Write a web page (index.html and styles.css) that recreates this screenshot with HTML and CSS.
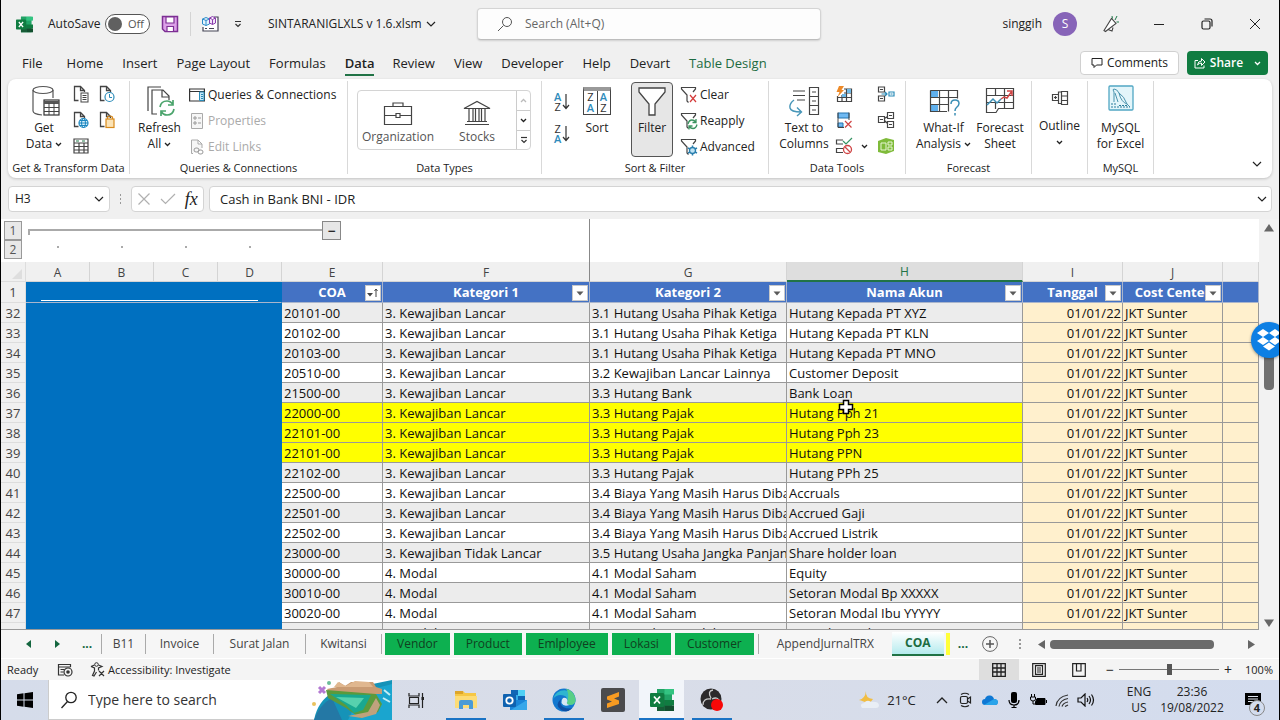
FILE: index.html
```html
<!DOCTYPE html>
<html lang="en">
<head>
<meta charset="utf-8">
<title>SINTARANIGLXLS v 1.6.xlsm - Excel</title>
<link rel="stylesheet" href="styles.css">
</head>
<body>
<svg class="defs" aria-hidden="true">
  <symbol id="chev" viewBox="0 0 10 6"><path d="M1 1l4 4 4-4" fill="none" stroke="currentColor" stroke-width="1.2"/></symbol>
  <symbol id="chev-s" viewBox="0 0 7 5"><path d="M1 1l2.500 2.500L6 1" fill="none" stroke="currentColor" stroke-width="1.300"/></symbol>
  <symbol id="tri" viewBox="0 0 8 5"><path d="M0.500 0.500h7L4 4.500z" fill="#5a5a5a"/></symbol>
  <symbol id="page" viewBox="0 0 16 18"><path d="M5.500 15.500h-4v-14h6l4 4v1.500M7.500 1.500v4h4" fill="none" stroke="#444" stroke-width="1.300"/></symbol>
  <symbol id="funnel" viewBox="0 0 18 18"><path d="M8.500 16.500L7 15V9L1.500 3V1.500h14V3L13 6" fill="none" stroke="#444" stroke-width="1.200"/></symbol>
  <symbol id="xl" viewBox="0 0 24 24"><path d="M7 1h15v22H7z" fill="#21a366"/><path d="M7 1h7.500v5.500H7z" fill="#21a366"/><path d="M14.500 1H24v5.500h-9.500z" fill="#33c481"/><path d="M7 6.500h7.500V12H7z" fill="#107c41"/><path d="M14.500 12H24v5.500h-9.500z" fill="#107c41"/><path d="M7 12h7.500v11H7z" fill="#185c37"/><path d="M14.500 17.500H24V23h-9.500z" fill="#134f2f"/><rect y="5" width="14" height="14" rx="1" fill="#107c41"/><path d="M4 8.500l6 7M10 8.500l-6 7" stroke="#fff" stroke-width="1.800"/></symbol>
</svg>

<header class="titlebar">
  <div class="title-left">
    <svg class="i16" viewBox="0 0 24 24"><use href="#xl"/></svg>
    <span class="autosave">AutoSave</span>
    <label class="toggle"><input type="checkbox" aria-label="AutoSave">Off</label>
    <button class="save" aria-label="Save"><svg width="18" height="18" viewBox="0 0 18 18"><path d="M1.500 1.500h15v15H4l-2.500-2.500z" fill="#dca0e8" stroke="#7d2f94" stroke-width="1.500"/><path d="M5 2h8v6H5zM6 11.500h6.500v5H6z" fill="#fff" stroke="#7d2f94" stroke-width="1.200"/></svg></button>
    <span class="qsep"></span>
    <button class="qat" aria-label="Model"><svg width="18" height="18" viewBox="0 0 18 18"><path d="M13 2h4v14H2v-4" fill="#fff" stroke="#445" stroke-width="1.200"/><path d="M1.500 4L5 2.500 8.500 4v5L5 10.500 1.500 9zM1.500 4L5 5.500 8.500 4M5 5.500v5" fill="#e4f4fd" stroke="#2c8ccb"/><path d="M8.500 3L11.500 1.500 14.500 3v5L11.500 9.500 8.500 8zM8.500 3l3 1.500 3-1.500M11.500 4.500v5" fill="#f3e5fa" stroke="#8b3fae"/><path d="M4 13.500h2M8 13.500h5" stroke="#445"/></svg></button>
    <button class="more" aria-label="Customize toolbar"><svg width="8" height="8" viewBox="0 0 8 8"><path d="M1 1.500h6" stroke="#333"/><path d="M1.500 4L4 6.500 6.500 4" fill="none" stroke="#333" stroke-width="1.200"/></svg></button>
    <button class="docname">SINTARANIGLXLS v 1.6.xlsm <svg width="10" height="6"><use href="#chev"/></svg></button>
  </div>
  <label class="search"><svg width="16" height="16" viewBox="0 0 16 16"><circle cx="10" cy="6" r="4.500" fill="none" stroke="#555"/><path d="M6.500 9.500L1 15" stroke="#555"/></svg><input type="text" placeholder="Search (Alt+Q)" aria-label="Search"></label>
  <div class="title-right">
    <span>singgih</span>
    <button class="avatar" aria-label="Account">S</button>
    <button class="win" aria-label="Coming soon"><svg width="18" height="18" viewBox="0 0 18 18"><path d="M2 15.500L9.500 3.500l4.500 5L3.500 16.500zM6 14.500l4 1.500 1-3.500" fill="#fff" stroke="#444" stroke-width="1.100"/><path d="M10.500 3.500L10 1M13 5l2-4M14.500 7H17" stroke="#1e7a4a"/></svg></button>
    <button class="win" aria-label="Minimize"><svg width="12" height="12" viewBox="0 0 12 12"><path d="M1 6.500h10" stroke="#222"/></svg></button>
    <button class="win" aria-label="Restore"><svg width="12" height="12" viewBox="0 0 12 12"><rect x="1" y="3" width="8" height="8" rx="1.500" fill="none" stroke="#222" stroke-width="1.200"/><path d="M3.500 1H9q2 0 2 2v5.500" fill="none" stroke="#222" stroke-width="1.200"/></svg></button>
    <button class="win" aria-label="Close"><svg width="12" height="12" viewBox="0 0 12 12"><path d="M1 1l10 10M11 1L1 11" stroke="#222"/></svg></button>
  </div>
</header>

<nav class="tabs">
  <button class="file">File</button><button>Home</button><button>Insert</button><button>Page Layout</button><button>Formulas</button><button class="on">Data</button><button>Review</button><button>View</button><button>Developer</button><button>Help</button><button>Devart</button><button class="ctx">Table Design</button>
  <div class="tab-actions">
    <button class="comments"><svg width="12" height="12" viewBox="0 0 12 12"><path d="M1 1.500h10v6.500H5.500L3 10.500V8H1z" fill="none" stroke="#222"/></svg>Comments</button>
    <button class="share"><svg width="12" height="12" viewBox="0 0 12 12"><path d="M4 3.500H1v7.500h9V8.500M3.500 8q.5-4 4-4V1.500L11 5 7.500 8.500V6Q5 6 3.500 8z" fill="none" stroke="#fff"/></svg>Share<svg class="share-chev" width="7" height="5"><use href="#chev-s"/></svg></button>
  </div>
</nav>

<section class="ribbon">
  <div class="group g-get">
    <div class="body">
      <button class="big"><svg width="32" height="32" viewBox="0 0 32 32"><path d="M5 5v21q0 3 9 4M25 5v8" fill="none" stroke="#555" stroke-width="1.200"/><ellipse cx="15" cy="5" rx="10" ry="3.500" fill="none" stroke="#555" stroke-width="1.200"/><rect x="16" y="15" width="15" height="15" fill="#fff" stroke="#333" stroke-width="1.200"/><path d="M16 16h15v3H16z" fill="#555"/><path d="M16 22.500h15M16 26.500h15M21 18v12M26 18v12" stroke="#444"/></svg><span>Get<br>Data <svg width="7" height="5"><use href="#chev-s"/></svg></span></button>
      <div class="icons two">
        <button aria-label="From Text"><svg width="16" height="18"><use href="#page" width="16" height="18"/><rect x="8" y="8" width="7" height="9" fill="#fff" stroke="#444"/><path d="M9.500 10.500h4M9.500 12.500h4M9.500 14.500h4" stroke="#444"/></svg></button>
        <button aria-label="Recent Sources"><svg width="16" height="18"><use href="#page" width="16" height="18"/><circle cx="10.500" cy="12" r="4.500" fill="#fff" stroke="#2a8bb8" stroke-width="1.200"/><path d="M10.500 9v3.500H13" fill="none" stroke="#2a8bb8"/></svg></button>
        <button aria-label="From Web"><svg width="16" height="18"><use href="#page" width="16" height="18"/><circle cx="10.500" cy="12" r="4.500" fill="#d8effa" stroke="#1c87c0" stroke-width="1.200"/><path d="M6 12h9M7 9.500h7M7 14.500h7" stroke="#1c87c0"/><ellipse cx="10.500" cy="12" rx="2" ry="4.500" fill="none" stroke="#1c87c0"/></svg></button>
        <button aria-label="Existing Connections"><svg width="16" height="18"><use href="#page" width="16" height="18"/><rect x="7" y="8" width="8" height="8.500" fill="#fbe3b6" stroke="#d98a1b" stroke-width="1.200"/><path d="M8.500 8V6q2.500-2 5 0v2" fill="none" stroke="#d98a1b" stroke-width="1.200"/></svg></button>
        <button aria-label="From Table"><svg width="16" height="18" viewBox="0 0 16 18"><path d="M1 2h14v14H1zM1 6h14M1 9.500h14M1 13h14M6 6v10M11 6v10" fill="none" stroke="#444" stroke-width="1.200"/><path d="M3 4h3M9 4h3" stroke="#237d4b"/></svg></button>
      </div>
    </div>
    <h2>Get &amp; Transform Data</h2>
  </div>
  <div class="group g-query">
    <div class="body">
      <button class="big"><svg width="32" height="32" viewBox="0 0 32 32"><path d="M4 26V2h13M13 29H8V5h11l6 6v4M18 5v7h7" fill="none" stroke="#444" stroke-width="1.200"/><path d="M16 22q1-6 7-6 4 0 6 4M29 15v5h-5M30 24q-1 6-7 6-4 0-6-4M17 31v-5h5" fill="none" stroke="#4ba46c" stroke-width="1.700"/></svg><span>Refresh<br>All <svg width="7" height="5"><use href="#chev-s"/></svg></span></button>
      <div class="list">
        <button><svg width="16" height="16" viewBox="0 0 16 16"><path d="M.6 2h14.800v12H.6zM.6 4.500h14.800" fill="none" stroke="#333" stroke-width="1.200"/><path d="M10.500 5h4.500v8.500h-4.500z" fill="#c8e7f6" stroke="#2a8bb8"/><path d="M12 7.500h2M12 9.500h2M12 11.500h2" stroke="#2a8bb8"/></svg>Queries &amp; Connections</button>
        <button disabled><svg width="16" height="16" viewBox="0 0 16 16"><path d="M2.500.5h11v15h-11z" fill="#f6f6f6" stroke="#aaa"/><path d="M5 4h2v2H5zM5 9h2v2H5z" fill="none" stroke="#999"/><path d="M9 5h3M9 10h3" stroke="#999"/></svg>Properties</button>
        <button disabled><svg width="16" height="16" viewBox="0 0 16 16"><path d="M4 14.500H2.500V1H9l4 4v4M9 1v4h4" fill="#f6f6f6" stroke="#aaa"/><rect x="5" y="9" width="5" height="4" rx="2" fill="none" stroke="#999"/><rect x="9" y="11" width="5" height="4" rx="2" fill="none" stroke="#999"/></svg>Edit Links</button>
      </div>
    </div>
    <h2>Queries &amp; Connections</h2>
  </div>
  <div class="group g-types">
    <div class="body">
      <div class="gallery">
        <button class="tile"><svg width="30" height="28" viewBox="0 0 30 28"><path d="M1.500 7.500h27v18h-27zM10 7V4h10v3M1.500 16.500H13M17 16.500h11.500M13 14.500h4v4h-4z" fill="none" stroke="#444" stroke-width="1.200"/></svg>Organization</button>
        <button class="tile"><svg width="28" height="28" viewBox="0 0 28 28"><path d="M1 9.500L14 2.500l13 7zM2 25.500h24M4 22.500h20M6 10v12M10 10v12M12.500 10v12M16 10v12M18.500 10v12M22 10v12" fill="none" stroke="#444" stroke-width="1.200"/></svg>Stocks</button>
        <div class="spin">
          <button aria-label="Up" disabled><svg class="flip" width="7" height="5"><use href="#chev-s"/></svg></button>
          <button aria-label="Down"><svg width="7" height="5"><use href="#chev-s"/></svg></button>
          <button aria-label="More"><svg width="8" height="8" viewBox="0 0 8 8"><path d="M1 1.500h6" stroke="#333" stroke-width="1.200"/><path d="M1.500 4L4 6.500 6.500 4" fill="none" stroke="#333" stroke-width="1.200"/></svg></button>
        </div>
      </div>
    </div>
    <h2>Data Types</h2>
  </div>
  <div class="group g-sort">
    <div class="body">
      <div class="sorts">
        <button aria-label="Sort A to Z"><span class="az"><b>A</b><i>Z</i></span><svg width="8" height="16" viewBox="0 0 8 16"><path d="M4 0v14M1 11l3 3.500L7 11" fill="none" stroke="#333" stroke-width="1.200"/></svg></button>
        <button aria-label="Sort Z to A"><span class="az"><i>Z</i><b>A</b></span><svg width="8" height="16" viewBox="0 0 8 16"><path d="M4 0v14M1 11l3 3.500L7 11" fill="none" stroke="#333" stroke-width="1.200"/></svg></button>
      </div>
      <button class="big sort"><span class="sortbox"><i>Z</i><b>A</b><b>A</b><i>Z</i></span><span>Sort</span></button>
      <button class="big filter"><svg width="32" height="32" viewBox="0 0 32 32"><path d="M3 3h26v4L19 19v11h-6V19L3 7z" fill="#fff" stroke="#444" stroke-width="1.300"/></svg><span>Filter</span></button>
      <div class="list flist">
        <button><svg width="18" height="18"><use href="#funnel"/><path d="M10 9l6 7M16 9l-6 7" stroke="#d43b3b" stroke-width="1.200"/></svg>Clear</button>
        <button><svg width="18" height="18"><use href="#funnel"/><path d="M8 12q1-4 4-4 2 0 4 2M16 7v3.500h-3.500M17 12.500q-1 4-4 4-2 0-4-2M9 17.500V14h3.500" fill="none" stroke="#3b9460" stroke-width="1.300"/></svg>Reapply</button>
        <button><svg width="18" height="18"><use href="#funnel"/><circle cx="12.500" cy="12.500" r="3" fill="#bfe3f5" stroke="#2a7fae" stroke-width="1.300"/><path d="M12.500 7.500v2M12.500 15.500v2M8 10l2 1M15 14l2 1M8 15l2-1M15 11l2-1" stroke="#2a7fae" stroke-width="1.500"/></svg>Advanced</button>
      </div>
    </div>
    <h2>Sort &amp; Filter</h2>
  </div>
  <div class="group g-tools">
    <div class="body">
      <button class="big"><svg width="32" height="32" viewBox="0 0 32 32"><path d="M5 6h12M5 10.500h12M9 15h8" stroke="#444" stroke-width="1.200"/><path d="M21.500 2.500h9v27h-9zM21.500 11.500h9M21.500 20.500h9M24 7h4M24 16h4M24 25h4" fill="none" stroke="#444" stroke-width="1.200"/><path d="M6 15q-5 4-4 8 1 4 11 4M9 22.500l4.500 4.500L9 31" fill="none" stroke="#4796b8" stroke-width="1.400"/></svg><span>Text to<br>Columns</span></button>
      <div class="icons tools">
        <button aria-label="Flash Fill"><svg width="18" height="18" viewBox="0 0 18 18"><path d="M9 4h7.500v12.500h-14V11M2.500 12.500h14M7 10v6.500M11.500 4v12.500M9 8h7.500" fill="none" stroke="#444" stroke-width="1.200"/><path d="M12 4h4v4h-4zM7 9h4v3H7z" fill="#6fb9e6"/><path d="M4 1h5L6.500 5H9L2.500 12l2-5H1.500z" fill="#ee8a28"/></svg></button>
        <button aria-label="Consolidate"><svg width="18" height="18" viewBox="0 0 18 18"><path d="M1.500 2h6v5h-6zM1.500 11h6v5h-6zM3 4.500h3M3 13.500h3" fill="none" stroke="#444" stroke-width="1.200"/><path d="M4.500 9H10M8 7l2 2-2 2M12 7h5v4h-5zM13.500 9h2" fill="none" stroke="#2a8bb8" stroke-width="1.200"/></svg></button>
        <button aria-label="Remove Duplicates"><svg width="18" height="18" viewBox="0 0 18 18"><path d="M3 2h11v5H3zM3 12h5v4H3z" fill="#6fb9f2" stroke="#2575b0"/><path d="M3 1.500v15h6M14 1.500V9" fill="none" stroke="#444"/><path d="M10 10l6.500 6.500M16.500 10L10 16.500" stroke="#cf4444" stroke-width="1.200"/></svg></button>
        <button aria-label="Relationships"><svg width="18" height="18" viewBox="0 0 18 18"><path d="M1.500 5.500h6v6h-6zM10.500 1.500h6v6h-6zM10.500 10.500h6v6h-6zM3 8.500h3M12 4.500h3M12 13.500h3M7.500 7.500l3-2M7.500 9.500l3 3" fill="none" stroke="#444" stroke-width="1.200"/></svg></button>
        <button aria-label="Data Validation"><svg width="18" height="18" viewBox="0 0 18 18"><path d="M8 3H1.500v4H8M8 11.500H1.500v4H8" fill="none" stroke="#444" stroke-width="1.200"/><path d="M8 4l3 3 6-6" fill="none" stroke="#379464" stroke-width="1.200"/><circle cx="12.500" cy="12.500" r="4" fill="#fff" stroke="#cf4444" stroke-width="1.300"/><path d="M10 10l5 5" stroke="#cf4444" stroke-width="1.300"/></svg><svg width="7" height="5"><use href="#chev-s"/></svg></button>
        <button aria-label="Data Model"><svg width="18" height="18" viewBox="0 0 18 18"><path d="M1 4l8-3 8 2v11l-8 3-8-2z" fill="#7fbb3a"/><path d="M4 6h5v7H4zM11 5h4v3h-4zM11 10h4v3h-4z" fill="none" stroke="#e9f6d5"/></svg></button>
      </div>
    </div>
    <h2>Data Tools</h2>
  </div>
  <div class="group g-fore">
    <div class="body">
      <button class="big"><svg width="32" height="32" viewBox="0 0 32 32"><path d="M2 5h8v7H2zM2 19h8v7H2z" fill="#5fb0ee"/><path d="M2.500 5.500h27v8M19 26.500H2.500v-21M11.500 5.500v21M20.500 5.500v21M2.500 12.500h27M2.500 19.500H20" fill="none" stroke="#444" stroke-width="1.200"/><path d="M23 19q0-4 4-4t4 3.500q0 2-2.500 4-1.500 1.300-1.500 3.500M27 28v2.500" fill="none" stroke="#3c8fb5" stroke-width="1.500"/></svg><span>What-If<br>Analysis <svg width="7" height="5"><use href="#chev-s"/></svg></span></button>
      <button class="big"><svg width="32" height="32" viewBox="0 0 32 32"><path d="M2.500 3.500h27v20h-15l-2.500 4H2.500zM11.500 3.500v7M20.500 3.500v20M2.500 10.500h27M2.500 17.500h27M11.500 17.500V24" fill="none" stroke="#444" stroke-width="1.200"/><path d="M3 20l6-6 4 4 4-4" fill="none" stroke="#3c8fb5" stroke-width="1.500"/><path d="M17 14l3-2 3 1 5-7M23 6h5v5" fill="none" stroke="#cf4444" stroke-width="1.500"/></svg><span>Forecast<br>Sheet</span></button>
    </div>
    <h2>Forecast</h2>
  </div>
  <div class="group g-out">
    <div class="body">
      <button class="big outline"><svg width="18" height="16" viewBox="0 0 18 16"><path d="M1.500 4.500h6v6h-6zM3 7.500h3M4.500 6v3M7.500 4V2h3M7.500 11v2.500h3M10.500 1.500h6v13h-6zM10.500 6h6M10.500 10.500h6" fill="none" stroke="#444" stroke-width="1.200"/></svg><span>Outline<br><svg width="7" height="5"><use href="#chev-s"/></svg></span></button>
    </div>
  </div>
  <div class="group g-my">
    <div class="body">
      <button class="big"><svg width="28" height="28" viewBox="0 0 28 28"><rect x="2" y="1" width="24" height="24" rx="1" fill="#e3f5fa" stroke="#51a7c4" stroke-width="1.300"/><path d="M7 17V7q-2-3 0-3 3 0 5 4 5 3 8 11l3 3M8 8l3 9M12 8q2 9 8 11" fill="none" stroke="#4b94ae"/><path d="M4 19h6M4 22h19M12 20.500h8" stroke="#2b7d9b" stroke-dasharray="2 1"/></svg><span>MySQL<br>for Excel</span></button>
    </div>
    <h2>MySQL</h2>
  </div>
  <button class="collapse" aria-label="Collapse ribbon"><svg width="10" height="6"><use href="#chev"/></svg></button>
</section>

<div class="formula">
  <button class="namebox">H3<svg width="10" height="6"><use href="#chev"/></svg></button>
  <span class="grip"></span>
  <div class="fx">
    <button aria-label="Cancel"><svg width="14" height="14" viewBox="0 0 14 14"><path d="M1.500 1.500l11 11M12.500 1.500l-11 11" stroke="#b0b0b0" stroke-width="1.200"/></svg></button>
    <button aria-label="Enter"><svg width="16" height="12" viewBox="0 0 16 12"><path d="M1 6l4.500 4.500L15 1" fill="none" stroke="#b0b0b0" stroke-width="1.200"/></svg></button>
    <button class="fxi" aria-label="Insert function">fx</button>
  </div>
  <div class="fbox"><input type="text" value="Cash in Bank BNI - IDR" aria-label="Formula"><svg width="10" height="6"><use href="#chev"/></svg></div>
</div>

<main class="sheet">
  <div class="pane">
    <div class="levels">
      <div class="level-btns"><button>1</button><button>2</button></div>
      <div class="bracket">
        <div class="bar"><span></span><button aria-label="Collapse columns">−</button></div>
        <div class="dots"><i></i><i></i><i></i><i></i></div>
      </div>
    </div>
    <table>
      <colgroup><col class="c-n"><col class="c-a"><col class="c-a"><col class="c-a"><col class="c-a"><col class="c-e"><col class="c-f"><col class="c-g"><col class="c-h"><col class="c-i"><col class="c-i"><col></colgroup>
      <thead>
        <tr class="letters"><th class="corner"><svg width="10" height="10" viewBox="0 0 10 10"><path d="M10 0v10H0z" fill="#dedede"/></svg></th><th>A</th><th>B</th><th>C</th><th>D</th><th>E</th><th class="frz">F</th><th>G</th><th class="sel">H</th><th>I</th><th>J</th><th></th></tr>
        <tr class="names"><th class="n">1</th><th class="blue top" colspan="4"><span></span></th>
          <th>COA<button class="dd" aria-label="Filter COA"><svg width="12" height="10" viewBox="0 0 12 10"><path d="M0 5h6L3 8.500z" fill="#444"/><path d="M9 9V1M7.500 3L9 1l1.500 2" fill="none" stroke="#444"/></svg></button></th>
          <th>Kategori 1<button class="dd" aria-label="Filter Kategori 1"><svg width="8" height="5"><use href="#tri"/></svg></button></th>
          <th>Kategori 2<button class="dd" aria-label="Filter Kategori 2"><svg width="8" height="5"><use href="#tri"/></svg></button></th>
          <th>Nama Akun<button class="dd" aria-label="Filter Nama Akun"><svg width="8" height="5"><use href="#tri"/></svg></button></th>
          <th>Tanggal<button class="dd" aria-label="Filter Tanggal"><svg width="8" height="5"><use href="#tri"/></svg></button></th>
          <th>Cost Center<button class="dd" aria-label="Filter Cost Center"><svg width="8" height="5"><use href="#tri"/></svg></button></th><th></th></tr>
      </thead>
      <tbody>
        <tr class="alt"><th>32</th><td class="blue" colspan="4" rowspan="17"></td><td>20101-00</td><td>3. Kewajiban Lancar</td><td>3.1 Hutang Usaha Pihak Ketiga</td><td>Hutang Kepada PT XYZ</td><td class="d">01/01/22</td><td class="w">JKT Sunter</td><td class="w"></td></tr>
        <tr><th>33</th><td>20102-00</td><td>3. Kewajiban Lancar</td><td>3.1 Hutang Usaha Pihak Ketiga</td><td>Hutang Kepada PT KLN</td><td class="d">01/01/22</td><td class="w">JKT Sunter</td><td class="w"></td></tr>
        <tr class="alt"><th>34</th><td>20103-00</td><td>3. Kewajiban Lancar</td><td>3.1 Hutang Usaha Pihak Ketiga</td><td>Hutang Kepada PT MNO</td><td class="d">01/01/22</td><td class="w">JKT Sunter</td><td class="w"></td></tr>
        <tr><th>35</th><td>20510-00</td><td>3. Kewajiban Lancar</td><td>3.2 Kewajiban Lancar Lainnya</td><td>Customer Deposit</td><td class="d">01/01/22</td><td class="w">JKT Sunter</td><td class="w"></td></tr>
        <tr class="alt"><th>36</th><td>21500-00</td><td>3. Kewajiban Lancar</td><td>3.3 Hutang Bank</td><td>Bank Loan</td><td class="d">01/01/22</td><td class="w">JKT Sunter</td><td class="w"></td></tr>
        <tr class="hot"><th>37</th><td>22000-00</td><td>3. Kewajiban Lancar</td><td>3.3 Hutang Pajak</td><td class="cur">Hutang Pph 21<svg class="cursor" width="16" height="16" viewBox="0 0 16 16"><path d="M5.500 1.500h5v4h4v5h-4v4h-5v-4h-4v-5h4z" fill="#fff" stroke="#000" stroke-width="1.500"/></svg></td><td class="d">01/01/22</td><td class="w">JKT Sunter</td><td class="w"></td></tr>
        <tr class="hot"><th>38</th><td>22101-00</td><td>3. Kewajiban Lancar</td><td>3.3 Hutang Pajak</td><td>Hutang Pph 23</td><td class="d">01/01/22</td><td class="w">JKT Sunter</td><td class="w"></td></tr>
        <tr class="hot"><th>39</th><td>22101-00</td><td>3. Kewajiban Lancar</td><td>3.3 Hutang Pajak</td><td>Hutang PPN</td><td class="d">01/01/22</td><td class="w">JKT Sunter</td><td class="w"></td></tr>
        <tr class="alt"><th>40</th><td>22102-00</td><td>3. Kewajiban Lancar</td><td>3.3 Hutang Pajak</td><td>Hutang PPh 25</td><td class="d">01/01/22</td><td class="w">JKT Sunter</td><td class="w"></td></tr>
        <tr><th>41</th><td>22500-00</td><td>3. Kewajiban Lancar</td><td>3.4 Biaya Yang Masih Harus Dibayar</td><td>Accruals</td><td class="d">01/01/22</td><td class="w">JKT Sunter</td><td class="w"></td></tr>
        <tr class="alt"><th>42</th><td>22501-00</td><td>3. Kewajiban Lancar</td><td>3.4 Biaya Yang Masih Harus Dibayar</td><td>Accrued Gaji</td><td class="d">01/01/22</td><td class="w">JKT Sunter</td><td class="w"></td></tr>
        <tr><th>43</th><td>22502-00</td><td>3. Kewajiban Lancar</td><td>3.4 Biaya Yang Masih Harus Dibayar</td><td>Accrued Listrik</td><td class="d">01/01/22</td><td class="w">JKT Sunter</td><td class="w"></td></tr>
        <tr class="alt"><th>44</th><td>23000-00</td><td>3. Kewajiban Tidak Lancar</td><td>3.5 Hutang Usaha Jangka Panjang</td><td>Share holder loan</td><td class="d">01/01/22</td><td class="w">JKT Sunter</td><td class="w"></td></tr>
        <tr><th>45</th><td>30000-00</td><td>4. Modal</td><td>4.1 Modal Saham</td><td>Equity</td><td class="d">01/01/22</td><td class="w">JKT Sunter</td><td class="w"></td></tr>
        <tr class="alt"><th>46</th><td>30010-00</td><td>4. Modal</td><td>4.1 Modal Saham</td><td>Setoran Modal Bp XXXXX</td><td class="d">01/01/22</td><td class="w">JKT Sunter</td><td class="w"></td></tr>
        <tr><th>47</th><td>30020-00</td><td>4. Modal</td><td>4.1 Modal Saham</td><td>Setoran Modal Ibu YYYYY</td><td class="d">01/01/22</td><td class="w">JKT Sunter</td><td class="w"></td></tr>
        <tr class="alt"><th>48</th><td>31000-00</td><td>4. Modal</td><td>4.2 Penarikan Modal</td><td>Penarikan Saham</td><td class="d">01/01/22</td><td class="w">JKT Sunter</td><td class="w"></td></tr>
      </tbody>
    </table>
  </div>
  <div class="vscroll">
    <button aria-label="Scroll up"><svg width="10" height="8" viewBox="0 0 10 8"><path d="M5 0l5 7.500H0z" fill="#666"/></svg></button>
    <span class="thumb"></span>
    <button aria-label="Scroll down"><svg width="10" height="8" viewBox="0 0 10 8"><path d="M5 8L0 .5h10z" fill="#666"/></svg></button>
  </div>
  <button class="dropbox" aria-label="Dropbox"><svg width="24" height="22" viewBox="0 0 24 22"><path d="M6 0l6 4-6 4-6-4zM18 0l6 4-6 4-6-4zM6 8l6 4-6 4-6-4zM18 8l6 4-6 4-6-4zM12 13.500l6 4-6 4-6-4z" fill="#fff"/></svg></button>
</main>

<div class="sheettabs">
  <div class="nav"><button aria-label="Previous sheet"><svg width="5" height="8" viewBox="0 0 5 8"><path d="M5 0v8L0 4z" fill="#14663f"/></svg></button><button aria-label="Next sheet"><svg width="5" height="8" viewBox="0 0 5 8"><path d="M0 0v8l5-4z" fill="#14663f"/></svg></button><button class="dotsb">...</button></div>
  <button class="st b11">B11</button><button class="st inv">Invoice</button><button class="st sur">Surat Jalan</button><button class="st kwi">Kwitansi</button>
  <button class="st green">Vendor</button><button class="st green">Product</button><button class="st green">Emlployee</button><button class="st green">Lokasi</button><button class="st green">Customer</button>
  <button class="st app">AppendJurnalTRX</button><button class="st coa">COA</button><span class="yel"></span>
  <button class="dotsb">...</button>
  <button class="add" aria-label="New sheet"><svg width="16" height="16" viewBox="0 0 16 16"><circle cx="8" cy="8" r="7.400" fill="none" stroke="#666"/><path d="M8 4v8M4 8h8" stroke="#555" stroke-width="1.500"/></svg></button>
  <span class="grip"></span>
  <div class="hscroll"><button aria-label="Scroll left"><svg width="7" height="9" viewBox="0 0 7 9"><path d="M7 0v9L0 4.500z" fill="#666"/></svg></button><span></span><button aria-label="Scroll right"><svg width="7" height="9" viewBox="0 0 7 9"><path d="M0 0v9l7-4.500z" fill="#666"/></svg></button></div>
</div>

<div class="status">
  <span class="ready">Ready</span>
  <button aria-label="Record macro"><svg width="16" height="14" viewBox="0 0 16 14"><path d="M7 12H1.500V1.500h12V4M1.500 4h12M3.500 6.500h4M3.500 9h3" fill="none" stroke="#333" stroke-width="1.200"/><circle cx="11" cy="9" r="4" fill="none" stroke="#333" stroke-width="1.200"/><circle cx="11" cy="9" r="1.800" fill="#333"/></svg></button>
  <button class="acc"><svg width="15" height="15" viewBox="0 0 15 15"><circle cx="6.500" cy="2.500" r="1.800" fill="none" stroke="#333"/><path d="M4.500 3L1 4.500M8.500 3L12 4.500 8.500 6v2.500M1 4.500L4.500 6v3l-2 4.500 1.500.5 2.500-4M9 9l5 5M14 9l-5 5" fill="none" stroke="#333" stroke-width="1.200"/></svg>Accessibility: Investigate</button>
  <div class="views">
    <button class="on" aria-label="Normal"><svg width="14" height="14" viewBox="0 0 14 14"><path d="M.7.7h12.600v12.600H.7zM.7 5h12.600M.7 9h12.600M5 .7v12.600M9 .7v12.600" fill="none" stroke="#222" stroke-width="1.300"/></svg></button>
    <button aria-label="Page layout"><svg width="14" height="14" viewBox="0 0 14 14"><path d="M.7.7h12.600v12.600H.7zM3.500 2.700h7v8.600h-7zM5 5h4M5 7h4M5 9h4" fill="none" stroke="#222" stroke-width="1.200"/></svg></button>
    <button aria-label="Page break preview"><svg width="14" height="14" viewBox="0 0 14 14"><path d="M.7 13.300V.7h12.600v12.600zM4.500.7V8H9V.7" fill="none" stroke="#222" stroke-width="1.200"/></svg></button>
  </div>
  <div class="zoom"><button>−</button><input type="range" aria-label="Zoom" min="10" max="190" value="100"><button>+</button><span>100%</span></div>
</div>

<footer class="taskbar">
  <button class="start" aria-label="Start"><svg width="16" height="16" viewBox="0 0 16 16"><path d="M0 2.200L6.500 1.300v6.200H0zM7.500 1.200L16 0v7.500H7.500zM0 8.500h6.500v6.200L0 13.800zM7.500 8.500H16V16l-8.500-1.200z" fill="#000"/></svg></button>
  <label class="tsearch"><svg width="18" height="18" viewBox="0 0 18 18"><circle cx="11" cy="6.500" r="5.200" fill="none" stroke="#222" stroke-width="1.300"/><path d="M7.500 10.500L1.500 17" stroke="#222" stroke-width="1.300"/></svg><input type="text" placeholder="Type here to search" aria-label="Type here to search">
    <svg class="art" width="80" height="40" viewBox="0 0 80 40"><path d="M2 40Q6 20 22 12L80 0v40z" fill="#1593b8"/><path d="M50 12L80 4v36H36z" fill="#1aa5cf"/><path d="M2 40Q8 24 20 18l10 22z" fill="#2478a5"/><path d="M15 9l10-2 2-5 6 4 6-4h22l3 5 6 2v5H18z" fill="#c99b73"/><path d="M22 7l4-5 8 4 9-5 14 1 4 5z" fill="#e0b78f"/><path d="M14 10l50 4 6 10-4 8-18 6-14-10-18-10z" fill="#5b9a3c"/><path d="M18 14l41 1-8 15-9 3-8-8z" fill="#19a890"/><path d="M24 17l28 1-8 10z" fill="#57d1ae"/><path d="M36 36l20-4 8-14 4 7-4 9-14 4z" fill="#bfa27d"/><path d="M72 10l6 5M71 18l7 4" stroke="#c2edf5" stroke-width="2"/><path d="M7 7l6 6M13 7l-6 6" stroke="#b47ad2" stroke-width="3"/><circle cx="17" cy="3" r="2" fill="#6bbd9a"/><circle cx="2" cy="24" r="2" fill="#e9c25e"/></svg></label>
  <div class="apps">
    <button aria-label="Task view"><svg width="17" height="17" viewBox="0 0 17 17"><path d="M1 1v3h10V1M1 16v-3h10v3M1.500 5.500h9v6h-9zM14.500 1v15" fill="none" stroke="#222" stroke-width="1.200"/><path d="M13.500 5h2.500v3h-2.500z" fill="#222"/></svg></button>
    <button class="run" aria-label="File Explorer"><svg width="24" height="24" viewBox="0 0 24 24"><path d="M1 3h8l2 2h11v15H1z" fill="#f6c744"/><path d="M1 8h22v12H1z" fill="#fddc76"/><path d="M1 3h8v3H1z" fill="#dda52a"/><path d="M5 21v-7q0-2 2-2h10q2 0 2 2v7h-4v-4H9v4z" fill="#4a9bd6"/></svg></button>
    <button aria-label="Outlook"><svg width="24" height="24" viewBox="0 0 24 24"><path d="M8 2h14v13H8z" fill="#1066b5"/><path d="M8 7h7v6H8z" fill="#32a9e7"/><path d="M15 2h7v6h-7zM15 13h7v5h-7z" fill="#50d0f5"/><path d="M7 12h17v10H7z" fill="#1a86d9"/><path d="M24 12L8 22h16z" fill="#36a7ea"/><rect y="6" width="13" height="13" rx="1" fill="#0f62b0"/><circle cx="6.500" cy="12.500" r="3.200" fill="none" stroke="#fff" stroke-width="1.800"/></svg></button>
    <button class="run" aria-label="Edge"><svg width="24" height="24" viewBox="0 0 24 24"><circle cx="12" cy="12" r="11.500" fill="#1378cf"/><path d="M1 11A11.500 11.500 0 0 1 23.500 12q0 5-6 5-4-1-2-4 0-6-7-6Q4 7 1 11z" fill="#2fb5d0"/><path d="M14 .8A11.500 11.500 0 0 1 23.500 12q0 5-6 5-4-1-2-4 2-8-1.500-12.200z" fill="#58cf86"/><path d="M9 11q-3 10 11 9.500Q15 25 9 22 2 17 9 11z" fill="#0f4fa3"/><path d="M11 10q4-1 4.500 3-2 3 2 4-6 2-8-2-.5-3 1.500-5z" fill="#d7e6f3"/></svg></button>
    <button aria-label="Sublime Text"><svg width="24" height="24" viewBox="0 0 24 24"><rect width="24" height="24" rx="2" fill="#4b4b4d"/><path d="M6 8.500L18 4v4.500l-5 2 5 2V16L6 20v-4.500l5-2-5-2z" fill="#f89b22"/></svg></button>
    <button class="run active" aria-label="Excel"><svg width="24" height="24" viewBox="0 0 24 24"><use href="#xl"/></svg></button>
    <button class="run" aria-label="OBS"><svg width="24" height="24" viewBox="0 0 24 24"><circle cx="11" cy="11" r="10.500" fill="#2c2a2b"/><path d="M11 10Q7 3 13 2M11 11q-8-1-8 6M12 11q6-3 8 3" fill="none" stroke="#c9c9c9" stroke-width="1.300"/><circle cx="17" cy="17" r="6" fill="#f80808"/></svg></button>
  </div>
  <div class="tray">
    <button class="weather"><svg width="22" height="20" viewBox="0 0 22 20"><path d="M8 1q-1 7 7 8-3 5-8 3T1 10q6-1 7-9z" fill="#f1bd43"/><path d="M4 18q-3-4 2-5 3-4 7-1 7-1 8 3 0 3-3 3z" fill="#e9eef5"/></svg>21°C</button>
    <button aria-label="Hidden icons"><svg width="12" height="7" viewBox="0 0 12 7"><path d="M1 6l5-5 5 5" fill="none" stroke="#222" stroke-width="1.300"/></svg></button>
    <button aria-label="Meet now"><svg width="14" height="16" viewBox="0 0 14 16"><rect x="1.500" y="4.500" width="7" height="7" rx="1.500" fill="none" stroke="#222" stroke-width="1.200"/><path d="M8.500 7l3-2v6l-3-2M2 2.500q4-2.500 8 0M2 13.500q4 2.500 8 0" fill="none" stroke="#222" stroke-width="1.200"/></svg></button>
    <button aria-label="OneDrive"><svg width="16" height="12" viewBox="0 0 16 12"><path d="M3 11Q0 11 0 8t3-3Q4 1 8 1.500q3 0 4 3.500 4 0 4 3.500Q15.500 11 13 11z" fill="#0f78d4"/><path d="M2 11l10-6q4 0 4 3.500Q15.500 11 13 11z" fill="#2aa4ea"/></svg></button>
    <button aria-label="Microphone"><svg width="12" height="16" viewBox="0 0 12 16"><rect x="3" width="6" height="11" rx="2" fill="#000"/><path d="M1 8q0 5 5 5t5-5M6 13v3M3.500 15.500h5" fill="none" stroke="#000" stroke-width="1.200"/></svg></button>
    <button aria-label="Battery"><svg width="17" height="13" viewBox="0 0 17 13"><path d="M1.500 0v3M4.500 0v3M.5 3h5v2q0 2-2.500 2T.5 5zM3 7v3h2" fill="none" stroke="#000"/><path d="M7 4.500h8v6H5.500V8z" fill="#000" stroke="#000"/><path d="M16.500 6v3" stroke="#000"/></svg></button>
    <button aria-label="Network"><svg width="14" height="13" viewBox="0 0 14 13"><path d="M1 12Q2 3 13 1M4 12.500Q5 6 13 4.500M7 12.500Q8 9 13 8M10 12.500l3-1.500" fill="none" stroke="#333" stroke-width="1.200"/></svg></button>
    <button aria-label="Volume"><svg width="18" height="14" viewBox="0 0 18 14"><path d="M1 5h3l4-4v12L4 9H1z" fill="none" stroke="#111" stroke-width="1.200"/><path d="M10 5q1.500 2 0 4M12 3q3 4 0 8M14.500 1.500q4 5.500 0 11" fill="none" stroke="#111" stroke-width="1.200"/></svg></button>
    <button class="lang">ENG<br>US</button>
    <button class="clock">23:36<br>19/08/2022</button>
    <button class="notif" aria-label="Notifications"><svg width="17" height="17" viewBox="0 0 17 17"><path d="M0 1h16v12h-5l-3 3v-3H0z" fill="#000"/><path d="M3 4.500h10M3 7h10M3 9.500h6" stroke="#dfe4ee"/></svg><b>4</b></button>
  </div>
</footer>
</body>
</html>
```
FILE: styles.css
```css
* { box-sizing: border-box; }
html, body { height: 100%; margin: 0; }
body {
  display: flex; flex-direction: column; overflow: hidden;
  border: solid #000; border-width: 0 1px;
  background: #f0f0f0; color: #222;
  font: 12px/16px "Open Sans", "Noto Sans", sans-serif;
}
button, input { font: inherit; color: inherit; background: none; border: 0; padding: 0; margin: 0; }
button { display: flex; align-items: center; justify-content: center; white-space: nowrap; }
input:focus { outline: none; }
svg { flex: none; }
.defs { position: absolute; width: 0; height: 0; }
.i16 { width: 17px; height: 17px; }

/* Title bar */
.titlebar { display: grid; grid-template-columns: minmax(0, 476fr) 344px minmax(0, 458fr); align-items: center; height: 48px; flex: none; }
.title-left { display: flex; align-items: center; padding-left: 15px; }
.autosave { width: 72px; padding-left: 15px; }
.toggle { display: flex; align-items: center; gap: 6px; width: 45px; height: 20px; padding-left: 2px; border: 1px solid #555; border-radius: 10px; background: #fff; font-size: 11px; color: #555; }
.toggle input { appearance: none; width: 14px; height: 14px; border-radius: 50%; background: #606060; }
.save { width: 40px; }
.qsep { width: 1px; height: 24px; background: #d4d4d4; }
.qat { width: 37px; }
.more { width: 20px; }
.docname { gap: 4px; margin-left: 20px; }
.search { display: flex; align-items: center; gap: 12px; height: 32px; padding-left: 19px; background: #fdfdfd; border: 1px solid #d4d4d4; border-bottom-color: #bdbdbd; border-radius: 4px; box-shadow: 0 1px 2px #0002; }
.search input { flex: 1; min-width: 0; }
.search input::placeholder { color: #666; opacity: 1; }
.title-right { display: flex; align-items: center; justify-content: flex-end; }
.avatar { width: 24px; height: 24px; margin: 0 10px 0 11px; border-radius: 50%; background: #8764b8; color: #fff; }
.win { width: 48px; height: 32px; }

/* Ribbon tabs */
.tabs { display: flex; align-items: flex-start; gap: 19px; height: 31px; flex: none; padding-left: 21px; }
.tabs > button { height: 25px; margin-top: 3px; flex: none; font-size: 13px; border-bottom: 2px solid transparent; }
.tabs > .file { margin-right: 5px; }
.tabs > .on { margin-right: -1px; font-weight: 600; border-color: #217346; }
.tabs > .ctx { color: #1c6b41; }
.tab-actions { display: flex; gap: 8px; margin: 3px 11px 0 auto; }
.tab-actions button { height: 24px; border-radius: 4px; gap: 4px; }
.comments { width: 99px; background: #fff; border: 1px solid #d0d0d0; }
.share { width: 81px; background: #107c41; color: #fff; font-weight: 600; }
.share-chev { margin-left: 7px; }

/* Ribbon */
.ribbon { display: flex; flex: none; height: 99px; margin: 0 7px; background: #fff; border-radius: 8px; box-shadow: 0 1px 3px #0003; }
.group { display: flex; flex-direction: column; flex: none; border-right: 1px solid #d9d9d9; margin: 2px 0 4px; }
.body { display: flex; flex: none; height: 79px; }
.group h2 { margin: 0; font: 11px/16px "Open Sans", "Noto Sans", sans-serif; text-align: center; white-space: nowrap; }
.g-get { width: 122px; } .g-query { width: 218px; } .g-types { width: 194px; } .g-sort { width: 227px; }
.g-tools { width: 137px; } .g-fore { width: 126px; } .g-out { width: 56px; } .g-my { width: 66px; }
.big { flex-direction: column; justify-content: flex-start; gap: 3px; padding-top: 4px; }
.big > svg { height: 32px; }
.big span svg { display: inline-block; vertical-align: 1px; }
.g-get .big { width: 64px; padding-left: 8px; }
.icons { display: grid; grid-template-rows: 26px 26px 26px; align-content: start; justify-items: center; }
.two { grid-template-columns: 18px 18px; column-gap: 8px; }
.g-query .big { width: 59px; }
.list { display: flex; flex-direction: column; align-items: flex-start; padding-top: 1px; }
.list button { height: 26px; gap: 3px; }
.list button:disabled { color: #aaa; }
.gallery { display: flex; width: 174px; height: 60px; margin: 9px 0 0 9px; border: 1px solid #d4d4d4; border-radius: 4px; }
.tile { flex-direction: column; gap: 2px; width: 80px; color: #555; padding-top: 3px; }
.tile svg { height: 28px; }
.tile + .tile { width: 78px; }
.spin { display: grid; grid-template-rows: 1fr 1fr 1fr; flex: 1; border-left: 1px solid #ccc; }
.spin button + button { border-top: 1px solid #ccc; }
.spin button:disabled { color: #bbb; }
.flip { transform: rotate(180deg); }
.sorts { display: flex; flex-direction: column; align-items: flex-start; width: 36px; padding: 5px 0 0 12px; }
.sorts button { height: 32px; gap: 1px; }
.az { display: flex; flex-direction: column; }
.az b, .az i, .sortbox b, .sortbox i { font: 600 11px/10px "Open Sans", sans-serif; color: #2f8bbb; }
.az i, .sortbox i { color: #333; font-weight: 400; }
.sort { width: 38px; gap: 5px; padding-top: 6px; }
.sortbox { display: grid; grid-template-columns: 1fr 1fr; grid-template-rows: 11px 11px; align-items: center; justify-items: center; width: 28px; height: 28px; border: 1px solid #444; border-top: 4px solid #999; background: linear-gradient(#444, #444) center / 1px 100% no-repeat; }
.filter { width: 42px; height: 75px; margin: 1px 7px 0 15px; padding-top: 2px; border: 1px solid #555; border-radius: 4px; background: #e6e6e6; }
.flist button { gap: 2px; }
.g-tools .big { width: 70px; }
.tools { grid-template-columns: 24px 42px; justify-content: start; margin-left: -7px; }
.tools button { gap: 8px; }
.tools button:nth-child(odd) { width: 18px; justify-content: flex-start; }
.tools button:nth-child(even) { margin-left: 18px; }
.g-fore .big:first-child { width: 75px; }
.g-fore .big:last-child { width: 38px; }
.g-out .outline { width: 56px; gap: 12px; padding-top: 9px; }
.g-out .outline > svg { height: 16px; }
.g-my .big { width: 66px; gap: 5px; padding-top: 2px; }
.collapse { width: 30px; height: 24px; margin: 73px 0 0 auto; }

/* Formula bar */
.formula { display: flex; align-items: center; flex: none; height: 26px; margin: 8px 7px 7px; }
.namebox, .fx, .fbox { height: 26px; background: #fff; border: 1px solid #d4d4d4; border-radius: 4px; }
.namebox { width: 102px; justify-content: space-between; padding: 0 5px 0 6px; }
.grip { width: 21px; height: 12px; background: radial-gradient(circle, #999 1px, transparent 1px) center / 100% 4px; }
.fx { display: flex; width: 73px; }
.fx button { flex: 1; }
.fxi { font: italic 18px/20px "Liberation Serif", serif; color: #222; }
.fbox { display: flex; align-items: center; flex: 1; margin-left: 5px; padding: 0 4px 0 10px; }
.fbox input { flex: 1; min-width: 0; font-size: 13px; }

/* Worksheet */
.sheet { position: relative; display: flex; flex: 1; min-height: 0; }
.pane { flex: 1; min-width: 0; overflow: hidden; border-bottom: 1px solid #999; background: #fff; }
.levels { display: flex; height: 43px; }
.level-btns { width: 25px; padding: 2px 3px; }
.level-btns button { width: 18px; height: 19px; background: #e8e8e8; border: 1px solid #999; color: #555; }
.bracket { width: 564px; padding-top: 2px; border-right: 1px solid #888; }
.bar { display: flex; align-items: flex-start; }
.bar span { width: 294px; height: 6px; margin: 8px 0 0 2px; border-top: 2px solid #aaa; border-left: 2px solid #aaa; }
.bar button { width: 19px; height: 19px; border: 1px solid #888; background: #e6e6e6; font-size: 14px; font-weight: 600; }
.dots { display: flex; gap: 62px; padding: 6px 0 0 31px; }
.dots i { width: 2px; height: 2px; background: #aaa; }
table { width: 100%; table-layout: fixed; border-collapse: separate; border-spacing: 0; font-size: 13px; color: #111; }
.c-n { width: 25px; } .c-a { width: 64px; } .c-e { width: 101px; } .c-f { width: 207px; } .c-g { width: 197px; } .c-h { width: 236px; } .c-i { width: 100px; }
th, td { height: 20px; padding: 2px 2px 0; line-height: 17px; overflow: hidden; white-space: nowrap; text-align: left; font-weight: 400; border: solid #999; border-width: 0 1px 1px 0; }
tr > th:first-child { background: #f0f0f0; text-align: center; color: #444; padding: 2px 0 0; border-color: #ddd; }
.letters th { background: #f0f0f0; text-align: center; color: #444; font-size: 12px; border-color: #d4d4d4; }
.letters .frz { border-right-color: #888; }
.letters .sel { background: #dedede; color: #217346; border-bottom: 2px solid #217346; line-height: 16px; }
.letters .corner { text-align: right; line-height: 0; padding: 4px 3px 0 0; }
.names th { position: relative; height: 21px; padding: 0 2px; line-height: 20px; background: #4472c4; color: #fff; font-weight: 700; text-align: center; border-color: #a9b5cc; }
.names > th.n:first-child { padding: 0; font-weight: 400; }
.names .blue, td.blue { background: #0070c0; border-right-color: #0070c0; }
.names .top span { display: block; width: 217px; height: 1px; margin: 17px 0 0 13px; background: #fff; }
.dd { position: absolute; right: 1px; bottom: 1px; width: 16px; height: 16px; background: #fff; border: 1px solid #c8c8c8; }
.alt td { background-color: #ececec; }
.hot td { background-color: #ff0; }
tr td.blue { background-color: #0070c0; }
tr td.d, tr td.w { background-color: #fff0cd; }
td.d { text-align: right; padding-right: 1px; }
td.cur { position: relative; overflow: visible; }
.cursor { position: absolute; left: 51px; top: -4px; }
.vscroll { display: flex; flex-direction: column; align-items: center; width: 20px; padding: 4px 0 2px; background: #f2f2f2; }
.vscroll button { width: 19px; height: 10px; }
.thumb { width: 10px; height: 54px; margin: 103px 0 auto; border-radius: 4px; background: #707070; }
.dropbox { position: absolute; right: -8px; top: 103px; width: 36px; height: 36px; border-radius: 50%; background: #0d7fe4; box-shadow: 0 1px 3px #0006; }

/* Sheet tabs */
.sheettabs { display: flex; align-items: center; flex: none; height: 28px; background: #f6f6f6; color: #444; }
.nav { display: flex; gap: 24px; width: 101px; height: 20px; padding-left: 25px; border-right: 1px solid #aaa; }
.nav button { width: 5px; }
.nav .dotsb { width: 6px; }
.dotsb { color: #14663f; font-weight: 700; }
.st { height: 20px; flex: none; border-right: 1px solid #aaa; }
.b11 { width: 44px; } .inv { width: 68px; } .sur { width: 92px; } .kwi { width: 76px; margin-right: 3px; }
.green { height: 22px; padding: 0 12px; margin-right: 4px; background: #0db050; color: #10401f; border: 0; }
.app { width: 134px; border: 0; border-left: 1px solid #aaa; }
.coa { width: 52px; height: 24px; border: 0; border-bottom: 2px solid #217346; background: linear-gradient(#fff, #b5ebee); color: #1c6b41; font-weight: 700; }
.yel { width: 4px; height: 22px; margin: 0 8px 0 2px; background: #ffff3a; }
.add { margin-left: 14px; }
.sheettabs .grip { width: 20px; margin: 0 8px 0 12px; }
.hscroll { display: flex; align-items: center; flex: 1; gap: 5px; margin-right: 24px; }
.hscroll span { width: 164px; height: 9px; margin-right: auto; border-radius: 4px; background: #6b6b6b; }

/* Status bar */
.status { display: flex; align-items: center; flex: none; height: 22px; padding-left: 6px; background: #f4f4f4; border-top: 1px solid #fff; font-size: 11px; }
.ready { width: 50px; }
.acc { gap: 3px; margin-left: 17px; }
.views { display: flex; height: 100%; margin-left: auto; }
.views button { width: 40px; }
.views .on { background: #dedede; }
.zoom { display: flex; align-items: center; padding: 0 6px 0 4px; }
.zoom button { width: 14px; font-size: 14px; }
.zoom input { appearance: none; width: 100px; height: 16px; margin: 0 2px; background: linear-gradient(#777, #777) center / 100% 1px no-repeat; }
.zoom input::-webkit-slider-thumb { appearance: none; width: 5px; height: 11px; background: #555; }
.zoom span { margin-left: 10px; }

/* Taskbar */
.taskbar { display: flex; flex: none; height: 40px; background: linear-gradient(90deg, #d5dcea, #d9dde8 50%, #d3dcee); }
.start { width: 47px; }
.tsearch { display: flex; align-items: center; gap: 10px; width: 344px; padding-left: 11px; background: #fff; border: solid #ccc; border-width: 0 0 1px 1px; }
.tsearch input { flex: 1; min-width: 0; font-size: 14px; }
.tsearch input::placeholder { color: #333; opacity: 1; }
.art { height: 40px; }
.apps { display: flex; }
.apps button { width: 49px; }
.run { background: linear-gradient(#1a73c4, #1a73c4) center bottom / 40px 2px no-repeat; }
.apps .active { width: 45px; margin: 0 3px 0 2px; background-color: #f2f5fa; background-size: 100% 2px; }
.tray { display: flex; align-items: center; margin-left: auto; }
.tray button { width: 24px; height: 40px; }
.tray .weather { width: 66px; gap: 7px; margin-right: 10px; font-size: 13px; }
.tray .lang { width: 34px; margin-left: 24px; }
.tray .clock { width: 72px; }
.tray .notif { position: relative; width: 40px; margin: 0 6px 0 5px; }
.notif b { position: absolute; right: 8px; bottom: 4px; width: 16px; height: 16px; border: 1px solid #888; border-radius: 50%; background: #d3dcee; font: 700 11px/14px "Open Sans", sans-serif; }
```
